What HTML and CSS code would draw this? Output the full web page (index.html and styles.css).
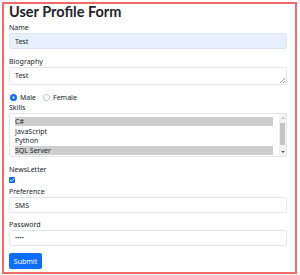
FILE: index.html
```html
<!DOCTYPE html>
<html>
<head>
<meta charset="utf-8">
<link rel="stylesheet" href="styles.css">
</head>
<body>
<form class="profile">
  <h2 class="title">User Profile Form</h2>

  <label class="lbl">Name</label>
  <input class="field autofill" type="text" value="Test">

  <label class="lbl gap-top">Biography</label>
  <textarea class="field area">Test</textarea>

  <div class="radios">
    <span class="radio checked"></span><span class="rtext">Male</span>
    <span class="radio"></span><span class="rtext">Female</span>
  </div>

  <label class="lbl">Skills</label>
  <div class="listbox">
    <div class="options">
      <div class="opt sel">C#</div>
      <div class="opt">JavaScript</div>
      <div class="opt">Python</div>
      <div class="opt sel">SQL Server</div>
    </div>
    <div class="sbar">
      <span class="arrow up"></span>
      <span class="thumb"></span>
      <span class="arrow down"></span>
    </div>
  </div>

  <label class="lbl gap-top">NewsLetter</label>
  <div class="checkrow">
    <span class="check">
      <svg viewBox="0 0 8 8" width="6" height="6"><path d="M1.5 4.2 L3.2 5.8 L6.5 2.3" fill="none" stroke="#fff" stroke-width="1.3" stroke-linecap="round" stroke-linejoin="round"/></svg>
    </span>
  </div>

  <label class="lbl">Preference</label>
  <input class="field" type="text" value="SMS">

  <label class="lbl gap-top2">Password</label>
  <input class="field pw" type="password" value="1234">

  <button class="btn" type="button">Submit</button>
</form>
</body>
</html>
```

FILE: styles.css
```css
html, body {
  margin: 0;
  padding: 0;
  background: #fff;
}
body {
  font-family: "Noto Sans", "Open Sans", sans-serif;
  color: #212529;
}
.profile {
  box-sizing: border-box;
  width: 295px;
  height: 272px;
  margin: 2px 0 0 2px;
  border: 2px solid #f46a6a;
  padding: 0 8px 0 5px;
  display: flex;
  flex-direction: column;
  align-items: stretch;
}
.title {
  margin: 0 0 4px 0;
  font-family: "Lato", "Noto Sans", sans-serif;
  font-size: 14.5px;
  font-weight: 700;
  line-height: 15px;
  color: #212529;
}
.lbl {
  display: block;
  font-size: 7px;
  line-height: 10px;
  color: #212529;
}
.gap-top { margin-top: 8px; }
.gap-top2 { margin-top: 7px; }
.field {
  box-sizing: border-box;
  width: 100%;
  height: 16px;
  margin: 0;
  padding: 0 5px;
  border: 1px solid #e4e6e9;
  border-radius: 2px;
  background: #fff;
  font-family: inherit;
  font-size: 7px;
  color: #212529;
  outline: none;
}
.autofill {
  background: #e8f0fe;
  border-color: #dfe6f1;
}
.area {
  height: 18px;
  padding: 3px 5px;
  line-height: 10px;
  resize: none;
  display: block;
  background-image:
    linear-gradient(135deg, transparent 45%, #9a9a9a 45%, #9a9a9a 58%, transparent 58%),
    linear-gradient(135deg, transparent 45%, #9a9a9a 45%, #9a9a9a 62%, transparent 62%);
  background-repeat: no-repeat;
  background-size: 5px 5px, 2px 2px;
  background-position: right 1px bottom 1px, right 1px bottom 1px;
}
.radios {
  margin-top: 7px;
  height: 11px;
  display: flex;
  align-items: center;
  font-size: 7px;
  padding-left: 1px;
}
.radio {
  box-sizing: border-box;
  width: 7px;
  height: 7px;
  border-radius: 50%;
  border: 1px solid #c3c7cc;
  background: #fff;
  margin-right: 3px;
}
.radio.checked {
  border: 2px solid #0d6efd;
  background: #fff;
  box-shadow: inset 0 0 0 0.5px #0d6efd;
}
.rtext {
  margin-right: 7px;
}
.listbox {
  box-sizing: border-box;
  height: 44px;
  border: 1px solid #e4e6e9;
  border-radius: 2px;
  display: flex;
  padding: 0 0 0 5px;
}
.options {
  flex: 1;
  padding: 3px 6px 0 0;
}
.opt {
  height: 9px;
  line-height: 9px;
  margin-bottom: 0.5px;
  font-size: 7px;
}
.opt.sel {
  background: #cecece;
}
.sbar {
  width: 7px;
  background: #f3f3f3;
  display: flex;
  flex-direction: column;
  align-items: center;
  padding: 2px 0;
  box-sizing: border-box;
}
.arrow {
  width: 0;
  height: 0;
  border-left: 2px solid transparent;
  border-right: 2px solid transparent;
  margin: 1px 0;
}
.arrow.up {
  border-bottom: 2px solid #b8b8b8;
}
.arrow.down {
  border-top: 2px solid #555;
}
.thumb {
  width: 5px;
  height: 22px;
  background: #c4c4c4;
  margin: 3px 0 auto;
}
.checkrow {
  height: 10px;
  margin-bottom: 2px;
  display: flex;
  align-items: center;
}
.check {
  width: 6px;
  height: 6px;
  border-radius: 1px;
  background: #0d6efd;
  display: flex;
  align-items: center;
  justify-content: center;
}
.pw {
  font-size: 6px;
  letter-spacing: 0px;
}
.btn {
  margin-top: 7px;
  align-self: flex-start;
  width: 33px;
  height: 16px;
  padding: 0;
  border: none;
  border-radius: 2px;
  background: #0d6efd;
  color: #fff;
  font-family: inherit;
  font-size: 7px;
}
```
